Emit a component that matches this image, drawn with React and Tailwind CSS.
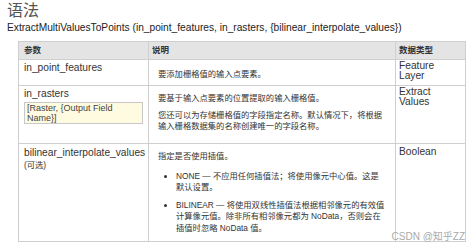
import React from "react";

const font = { fontFamily: '"Liberation Sans", "Noto Sans CJK SC", sans-serif' };

function App() {
  return (
    <div className="relative w-[474px] h-[248px] bg-white overflow-hidden text-[#333]" style={font}>
      <div className="pl-[7px] pt-[1px] text-[16px] leading-[19px] text-[#555]">语法</div>
      <div className="pl-[7px] pt-[1px] text-[10.2px] leading-[13px] text-[#222] whitespace-nowrap">
        ExtractMultiValuesToPoints (in_point_features, in_rasters, {"{"}bilinear_interpolate_values{"}"})
      </div>
      <table className="ml-[18px] mt-[7px] w-[447px] border-collapse table-fixed text-[10.2px]">
        <colgroup>
          <col className="w-[130px]" />
          <col className="w-[247px]" />
          <col className="w-[70px]" />
        </colgroup>
        <thead>
          <tr className="bg-[#e4e4e4] h-[18px]">
            <th className="border border-[#cfcfcf] text-left font-bold text-[8.5px] px-[5px] align-middle">参数</th>
            <th className="border border-[#cfcfcf] text-left font-bold text-[8.5px] px-[3px] align-middle">说明</th>
            <th className="border border-[#cfcfcf] text-left font-bold text-[8.5px] px-[3px] align-middle">数据类型</th>
          </tr>
        </thead>
        <tbody className="align-top">
          <tr className="h-[26px]">
            <td className="border border-[#cfcfcf] px-[5px] pt-[2px] leading-[12px]">in_point_features</td>
            <td className="border border-[#cfcfcf] pl-[9px] pt-[9px] text-[8.3px] leading-[11px]">要添加栅格值的输入点要素。</td>
            <td className="border border-[#cfcfcf] px-[3px] pt-[1px] leading-[10px]">Feature Layer</td>
          </tr>
          <tr className="h-[58px]">
            <td className="border border-[#cfcfcf] px-[5px] pt-[2px] leading-[12px]">
              <div>in_rasters</div>
              <div className="mt-[2px] bg-[#fffbe0] border border-[#c8c8c8] px-[2px] text-[9px] text-[#444]">
                <div className="leading-[10px] whitespace-nowrap">[Raster, {"{"}Output Field</div>
                <div className="leading-[10px] whitespace-nowrap">Name{"}"}]</div>
              </div>
            </td>
            <td className="border border-[#cfcfcf] pl-[9px] pr-[10px] pt-[7px] text-[8.3px] leading-[11px]">
              <div>要基于输入点要素的位置提取的输入栅格值。</div>
              <div className="mt-[6px]">您还可以为存储栅格值的字段指定名称。默认情况下，将根据输入栅格数据集的名称创建唯一的字段名称。</div>
            </td>
            <td className="border border-[#cfcfcf] px-[3px] pt-[1px] leading-[10px]">Extract Values</td>
          </tr>
          <tr className="h-[98px]">
            <td className="border border-[#cfcfcf] px-[5px] pt-[2px] leading-[13px]">
              <div>bilinear_interpolate_values</div>
              <div className="text-[8.3px]">(可选)</div>
            </td>
            <td className="border border-[#cfcfcf] pl-[9px] pr-[10px] pt-[7px] text-[8.3px] leading-[11.5px]">
              <div>指定是否使用插值。</div>
              <ul className="mt-[8px] pl-[18px] list-disc">
                <li>NONE — 不应用任何插值法；将使用像元中心值。这是默认设置。</li>
                <li className="mt-[6px]">BILINEAR — 将使用双线性插值法根据相邻像元的有效值计算像元值。除非所有相邻像元都为 NoData，否则会在插值时忽略 NoData 值。</li>
              </ul>
            </td>
            <td className="border border-[#cfcfcf] px-[3px] pt-[2px] leading-[12px]">Boolean</td>
          </tr>
        </tbody>
      </table>
      <div className="absolute right-[9px] bottom-[6px] text-[10px] leading-[10px] text-[#aaa]">CSDN @知乎ZZ</div>
    </div>
  );
}

export default App;
